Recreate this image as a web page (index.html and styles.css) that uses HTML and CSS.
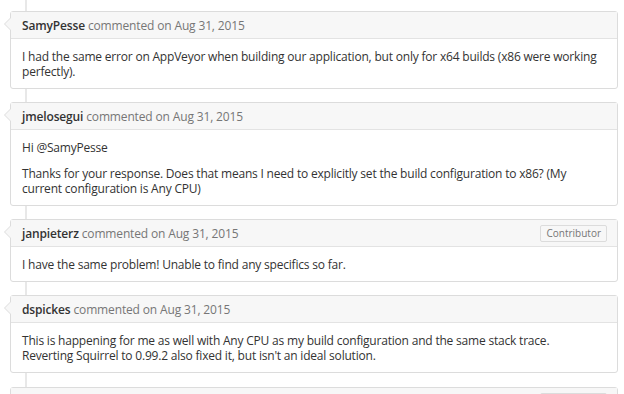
FILE: index.html
```
<!DOCTYPE html>
<html lang="en">
<head>
  <meta charset="UTF-8">
  <title>Issue comments</title>
  <link rel="stylesheet" href="styles.css">
</head>
<body>
  <div class="timeline">
    <div class="gap first"></div>

    <div class="comment">
      <div class="comment-header">
        <span class="title"><strong class="author">SamyPesse</strong> commented on Aug 31, 2015</span>
      </div>
      <div class="comment-body">
        <p>I had the same error on AppVeyor when building our application, but only for x64 builds (x86 were working perfectly).</p>
      </div>
    </div>

    <div class="gap"></div>

    <div class="comment">
      <div class="comment-header">
        <span class="title"><strong class="author">jmelosegui</strong> commented on Aug 31, 2015</span>
      </div>
      <div class="comment-body">
        <p>Hi @SamyPesse</p>
        <p>Thanks for your response. Does that means I need to explicitly set the build configuration to x86? (My current configuration is Any CPU)</p>
      </div>
    </div>

    <div class="gap"></div>

    <div class="comment">
      <div class="comment-header">
        <span class="title"><strong class="author">janpieterz</strong> commented on Aug 31, 2015</span>
        <span class="label">Contributor</span>
      </div>
      <div class="comment-body">
        <p>I have the same problem! Unable to find any specifics so far.</p>
      </div>
    </div>

    <div class="gap"></div>

    <div class="comment">
      <div class="comment-header">
        <span class="title"><strong class="author">dspickes</strong> commented on Aug 31, 2015</span>
      </div>
      <div class="comment-body">
        <p>This is happening for me as well with Any CPU as my build configuration and the same stack trace. Reverting Squirrel to 0.99.2 also fixed it, but isn't an ideal solution.</p>
      </div>
    </div>

    <div class="gap last"></div>

    <div class="comment">
      <div class="comment-header">
        <span class="title"></span>
        <span class="label">Contributor</span>
      </div>
    </div>
  </div>
</body>
</html>
```

FILE: styles.css
```
body {
  margin: 0;
  background: #fff;
  font-family: 'Open Sans', sans-serif;
  font-size: 12px;
  color: #333;
}

.timeline {
  padding: 0 6px 0 10px;
}

.gap {
  height: 13px;
  margin-left: 15px;
  border-left: 2px solid #e8e8e8;
}

.gap.first {
  height: 11px;
}

.gap.last {
  height: 14px;
}

.comment {
  position: relative;
  border: 1px solid #dcdcdc;
  border-radius: 3px;
  background: #fff;
}

/* little pointer on the left side */
.comment::before,
.comment::after {
  content: "";
  position: absolute;
  top: 5px;
  right: 100%;
  border: 7px solid transparent;
  border-right-color: #dcdcdc;
}

.comment::after {
  margin-right: -1px;
  border-right-color: #f7f7f7;
}

.comment-header {
  display: flex;
  align-items: center;
  height: 26px;
  padding: 0 10px 0 11px;
  background: #f7f7f7;
  border-bottom: 1px solid #e3e3e3;
  color: #767676;
  letter-spacing: -0.15px;
}

.title {
  flex: 1;
  line-height: 15px;
}

.author {
  font-weight: 600;
  color: #333;
}

.label {
  padding: 0 5px;
  border: 1px solid #dcdcdc;
  border-radius: 2px;
  font-size: 10px;
  line-height: 15px;
  letter-spacing: 0;
  color: #767676;
}

.comment-body {
  padding: 10px 15px 9px 11px;
  letter-spacing: -0.2px;
  line-height: 15px;
}

.comment-body p {
  margin: 0 0 11px;
}

.comment-body p:last-child {
  margin-bottom: 0;
}
```
